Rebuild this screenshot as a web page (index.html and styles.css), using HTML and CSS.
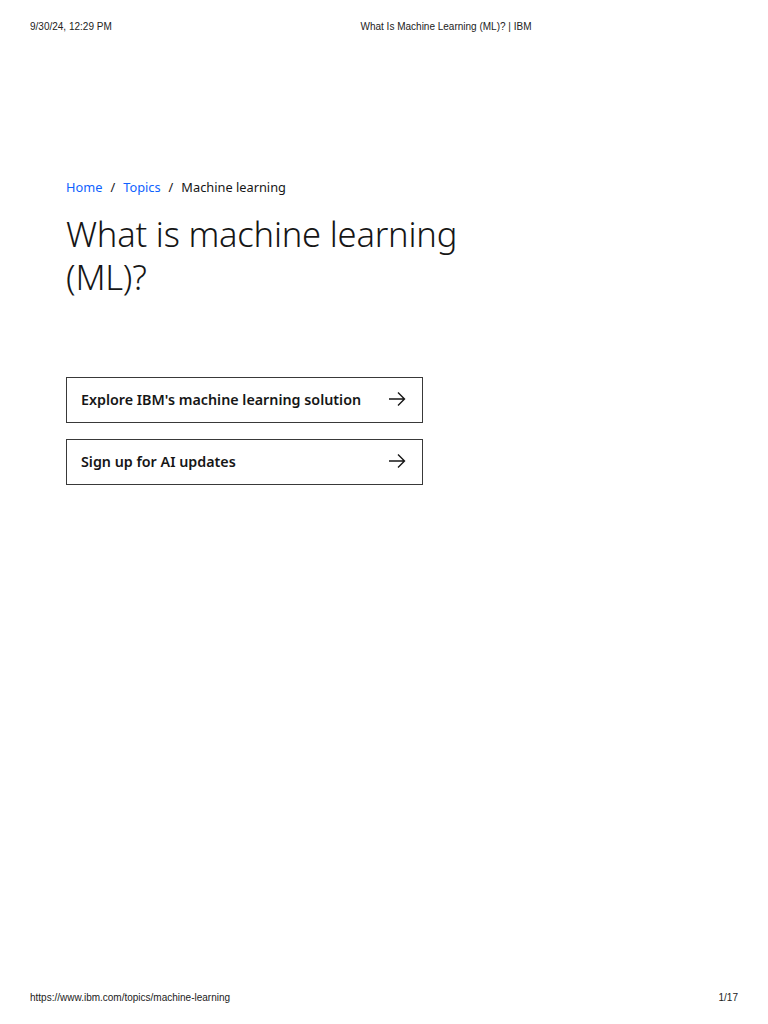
FILE: index.html
```html
<!DOCTYPE html>
<html lang="en">
<head>
<meta charset="utf-8">
<title>What Is Machine Learning (ML)? | IBM</title>
<link rel="stylesheet" href="styles.css">
</head>
<body>
<div class="page">
  <header class="print-head">
    <span class="print-date">9/30/24, 12:29 PM</span>
    <span class="print-title">What Is Machine Learning (ML)? | IBM</span>
    <span class="print-spacer"></span>
  </header>
  <main class="content">
    <nav class="crumbs">
      <a class="crumb-link" href="#">Home</a>
      <span class="sep">/</span>
      <a class="crumb-link" href="#">Topics</a>
      <span class="sep">/</span>
      <span class="crumb-current">Machine learning</span>
    </nav>
    <h1 class="title">What is machine learning<br>(ML)?</h1>
    <div class="actions">
      <a class="action" href="#">
        <span class="action-label">Explore IBM's machine learning solution</span>
        <svg class="arrow" width="20" height="20" viewBox="0 0 20 20" aria-hidden="true"><path d="M2 10 H17.5 M11 3.5 L17.5 10 L11 16.5" fill="none" stroke="#161616" stroke-width="1.4"/></svg>
      </a>
      <a class="action" href="#">
        <span class="action-label">Sign up for AI updates</span>
        <svg class="arrow" width="20" height="20" viewBox="0 0 20 20" aria-hidden="true"><path d="M2 10 H17.5 M11 3.5 L17.5 10 L11 16.5" fill="none" stroke="#161616" stroke-width="1.4"/></svg>
      </a>
    </div>
  </main>
  <footer class="print-foot">
    <span>https://www.ibm.com/topics/machine-learning</span>
    <span>1/17</span>
  </footer>
</div>
</body>
</html>
```
FILE: styles.css
```css
* { box-sizing: border-box; }
html, body { margin: 0; padding: 0; background: #fff; }
.page {
  width: 768px;
  height: 1024px;
  display: flex;
  flex-direction: column;
  font-family: "Liberation Sans", Arial, sans-serif;
  color: #161616;
}
.print-head {
  display: flex;
  justify-content: space-between;
  align-items: center;
  padding: 18px 30px 0 30px;
  font-size: 10px;
  color: #222;
  height: 34px;
}
.print-date { width: 180px; }
.print-title { flex: 1; text-align: center; padding-left: 124px; }
.print-spacer { width: 180px; }
.content {
  flex: 1;
  padding: 143px 0 0 66px;
  font-family: "Noto Sans", "Open Sans", sans-serif;
}
.crumbs {
  display: flex;
  align-items: center;
  gap: 7px;
  font-size: 12.8px;
  line-height: 20px;
}
.crumb-link { color: #0f62fe; text-decoration: none; }
.sep { color: #161616; margin: 0 1px; }
.crumb-current { color: #161616; }
.title {
  margin: 15px 0 0 0;
  font-weight: 300;
  font-size: 34.5px;
  line-height: 43px;
  letter-spacing: -0.2px;
  color: #161616;
}
.actions {
  margin-top: 79px;
  display: flex;
  flex-direction: column;
  gap: 16px;
  width: 357px;
}
.action {
  display: flex;
  align-items: center;
  justify-content: space-between;
  height: 46px;
  padding: 0 15px 2px 14px;
  border: 1px solid #393939;
  color: #161616;
  text-decoration: none;
  font-weight: 600;
  font-size: 14.3px;
}
.print-foot {
  display: flex;
  justify-content: space-between;
  align-items: center;
  padding: 0 30px 13px 30px;
  font-size: 10px;
  color: #222;
  height: 40px;
}
```
